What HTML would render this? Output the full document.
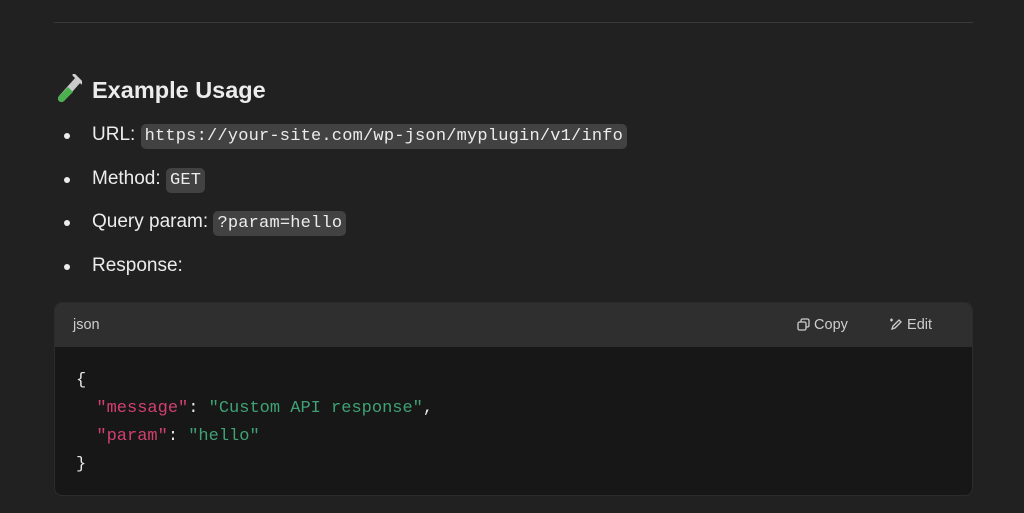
<!DOCTYPE html>
<html><head><style>
body{margin:0;width:1024px;height:513px;background:#212121;font-family:"Liberation Sans",sans-serif;color:#ececec;position:relative;overflow:hidden}
.hr{position:absolute;left:54px;top:22px;width:919px;height:1px;background:#3a3a3a}
h2{position:absolute;left:92px;top:76px;margin:0;font-size:23.5px;font-weight:bold;line-height:28px}
.emo{position:absolute;left:54px;top:74px}
.li{position:absolute;left:92px;font-size:19px;line-height:26px;white-space:nowrap}
.li:before{content:"";position:absolute;left:-28px;top:11px;width:6px;height:6px;border-radius:50%;background:#ececec}
code{font-family:"Liberation Mono",monospace;font-size:17px;letter-spacing:0.2px;background:#424242;border-radius:5px;padding:3px 4px 3px 4px}
.blk{position:absolute;left:54px;top:302px;width:919px;height:194px;border-radius:8px;background:#171717;overflow:hidden;border:1px solid #2c2c2c;box-sizing:border-box}
.hd{height:44px;background:#2f2f2f;font-size:14.5px;color:#cdcdcd;position:relative}
.hd span{position:absolute;top:14px}
pre{margin:0;position:absolute;left:21px;top:64px;font-family:"Liberation Mono",monospace;font-size:17px;line-height:28px;color:#e6e6e6}
.k{color:#d2406f}.s{color:#3fa274}
</style></head><body>
<div class="hr"></div>
<svg class="emo" width="28" height="30" viewBox="0 0 28 30"><path d="M22 3 L5 22 a3.5 3.5 0 0 0 5 5 L27 8z" fill="#e8e8e8" opacity="0.85"/><path d="M14 13 L5 22 a3.5 3.5 0 0 0 5 5 L19 18z" fill="#4caf50"/><path d="M20 1 L28 9" stroke="#cfcfcf" stroke-width="3" stroke-linecap="round"/></svg>
<h2>Example Usage</h2>
<div class="li" style="top:122px">URL: <code>https://your-site.com/wp-json/myplugin/v1/info</code></div>
<div class="li" style="top:166px">Method: <code>GET</code></div>
<div class="li" style="top:209px">Query param: <code>?param=hello</code></div>
<div class="li" style="top:253px">Response:</div>
<div class="blk">
<div class="hd"><span style="left:18px">json</span>
<span style="left:742px"><svg width="13" height="13" viewBox="0 0 13 13" style="vertical-align:-2px" fill="none" stroke="#cdcdcd" stroke-width="1.3"><rect x="1" y="4" width="8" height="8" rx="1.5"/><path d="M4 4V2.5A1.5 1.5 0 0 1 5.5 1h5A1.5 1.5 0 0 1 12 2.5v5A1.5 1.5 0 0 1 10.5 9H9"/></svg> Copy</span>
<span style="left:834px"><svg width="14" height="13" viewBox="0 0 14 13" style="vertical-align:-2px" fill="none" stroke="#cdcdcd" stroke-width="1.3"><path d="M3 11l1-3 6-6 2 2-6 6z M1 2h3M2.5 0.5v3"/></svg> Edit</span></div>
<pre>{
  <span class="k">"message"</span>: <span class="s">"Custom API response"</span>,
  <span class="k">"param"</span>: <span class="s">"hello"</span>
}</pre>
</div>
</body></html>
